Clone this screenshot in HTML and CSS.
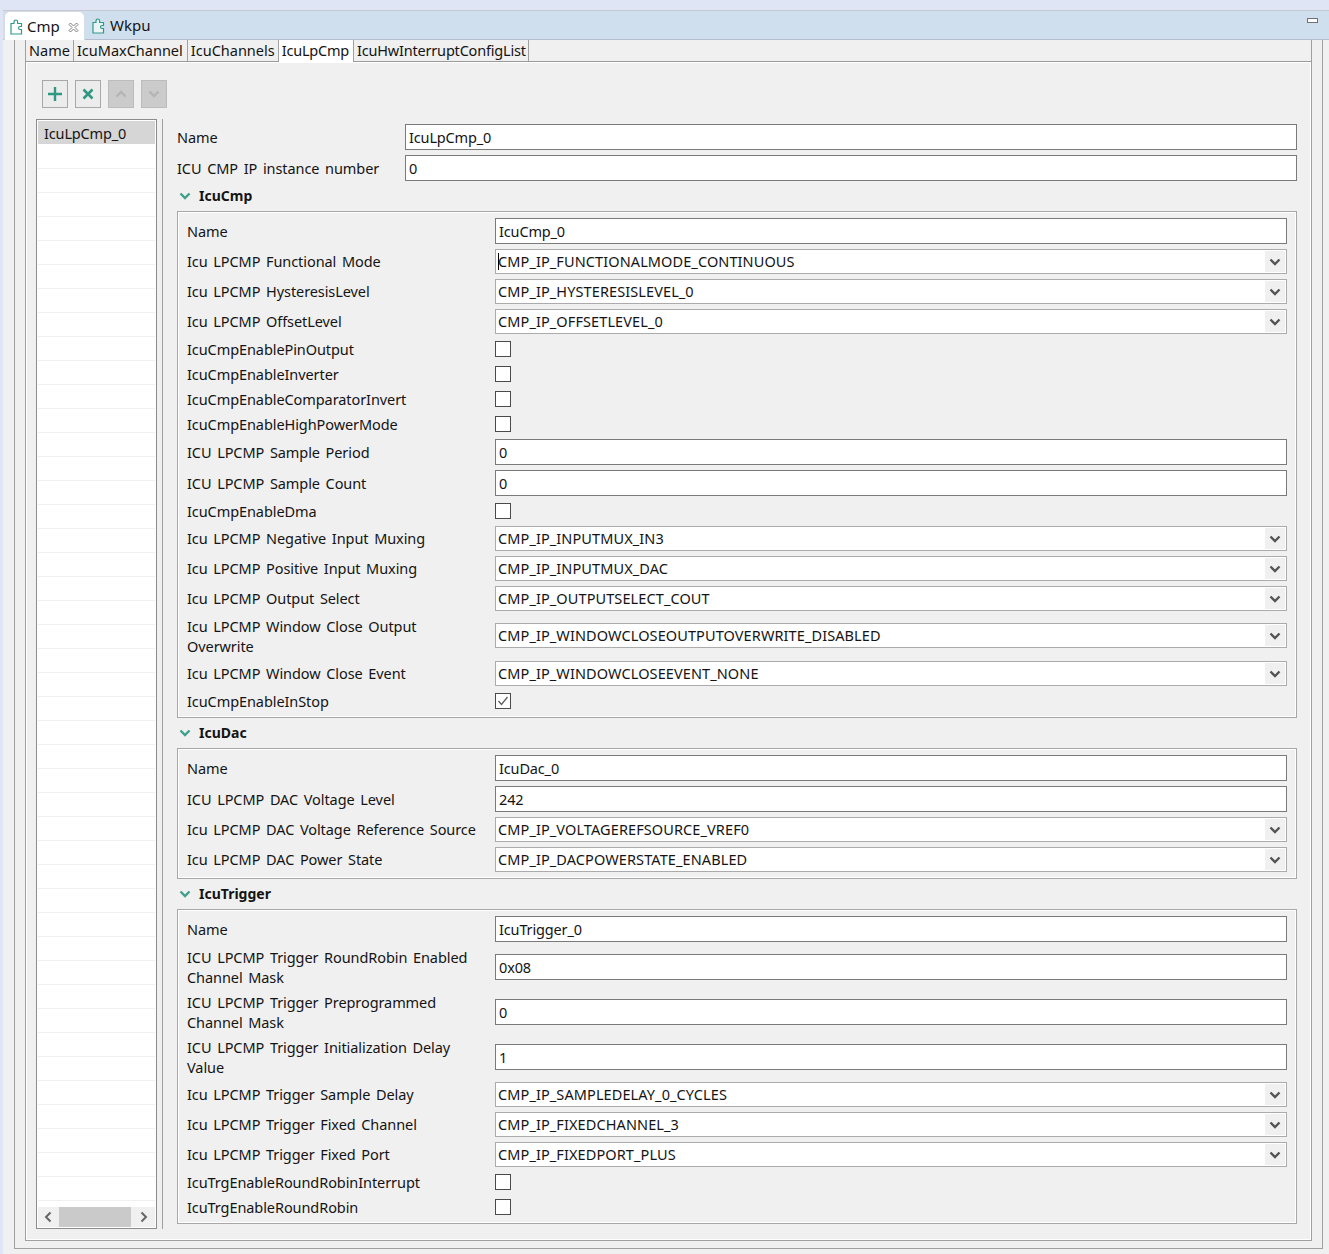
FILE: index.html
```html
<!DOCTYPE html>
<html lang="en">
<head>
<meta charset="utf-8">
<title>Cmp</title>
<link rel="stylesheet" href="styles.css">
</head>
<body>
<div class="topstrip"></div>
<div class="tabbar">
  <div class="tab active">
    <svg class="puzzle" viewBox="0 0 13 16"><path d="M1 4.500h3V2.800a1.800 1.800 0 0 1 3.600 0V4.500H11.500V7.500H10a1.500 1.500 0 0 0 0 3h1.500V15H1z" fill="#fff" stroke="#2e9c87" stroke-width="1.200"/></svg>
    <span>Cmp</span>
    <svg class="close" viewBox="0 0 11 11"><path d="M1 2.500 2.500 1l3 3 3-3L10 2.500l-3 3 3 3L8.500 10l-3-3-3 3L1 8.500l3-3z" fill="#fff" stroke="#7e7e7e" stroke-width="1"/></svg>
  </div>
  <div class="tab inactive">
    <svg class="puzzle" viewBox="0 0 13 16"><path d="M1 4.500h3V2.800a1.800 1.800 0 0 1 3.600 0V4.500H11.500V7.500H10a1.500 1.500 0 0 0 0 3h1.500V15H1z" fill="#eaf4f2" stroke="#2e9c87" stroke-width="1.200"/></svg>
    <span>Wkpu</span>
  </div>
  <div class="minimize"></div>
</div>
<div class="outer">
  <div class="inner">
    <div class="subtabs">
      <div class="subtab st-name">Name</div>
      <div class="subtab st-max">IcuMaxChannel</div>
      <div class="subtab st-chan">IcuChannels</div>
      <div class="subtab current">IcuLpCmp</div>
      <div class="subtab tight">IcuHwInterruptConfigList</div>
    </div>
    <div class="page">
      <div class="toolbar">
        <div class="tbtn"><svg viewBox="0 0 24 26"><path d="M12 6v14M5 13h14" stroke="#2e9880" stroke-width="2.400" fill="none"/></svg></div>
        <div class="tbtn"><svg viewBox="0 0 24 26"><path d="M7.500 8.500l9 9M16.500 8.500l-9 9" stroke="#2e9880" stroke-width="2.600" fill="none"/></svg></div>
        <div class="tbtn off"><svg viewBox="0 0 24 26"><path d="M7.500 15.500l4.500-4.500 4.500 4.500" stroke="#b4b4b4" stroke-width="2.400" fill="none"/></svg></div>
        <div class="tbtn off"><svg viewBox="0 0 24 26"><path d="M7.500 10.500l4.500 4.500 4.500-4.500" stroke="#b4b4b4" stroke-width="2.400" fill="none"/></svg></div>
      </div>
      <div class="master">
        <div class="list">
          <div class="listbody">
            <div class="item selected">IcuLpCmp_0</div>
            <div class="item"></div><div class="item"></div><div class="item"></div><div class="item"></div><div class="item"></div>
            <div class="item"></div><div class="item"></div><div class="item"></div><div class="item"></div><div class="item"></div>
            <div class="item"></div><div class="item"></div><div class="item"></div><div class="item"></div><div class="item"></div>
            <div class="item"></div><div class="item"></div><div class="item"></div><div class="item"></div><div class="item"></div>
            <div class="item"></div><div class="item"></div><div class="item"></div><div class="item"></div><div class="item"></div>
            <div class="item"></div><div class="item"></div><div class="item"></div><div class="item"></div><div class="item"></div>
            <div class="item"></div><div class="item"></div><div class="item"></div><div class="item"></div><div class="item"></div>
            <div class="item"></div><div class="item"></div><div class="item"></div><div class="item"></div><div class="item"></div>
            <div class="item"></div><div class="item"></div><div class="item"></div><div class="item"></div><div class="item"></div>
          </div>
          <div class="hscroll">
            <svg class="harrow" viewBox="0 0 8 12"><path d="M6.500 1.500L2 6l4.500 4.500" fill="none" stroke="#666" stroke-width="2"/></svg>
            <div class="thumb"></div>
            <svg class="harrow" viewBox="0 0 8 12"><path d="M1.500 1.500L6 6l-4.500 4.500" fill="none" stroke="#666" stroke-width="2"/></svg>
          </div>
        </div>
        <div class="sash"></div>
        <div class="detail">
          <div class="rows top">
            <div class="label">Name</div><div class="input">IcuLpCmp_0</div>
            <div class="label">ICU CMP IP instance number</div><div class="input">0</div>
          </div>

          <div class="sechead"><svg class="twist" viewBox="0 0 12 8"><path d="M1.500 1.500L6 6l4.500-4.500" fill="none" stroke="#3f9f8c" stroke-width="2.400"/></svg>IcuCmp</div>
          <div class="group">
            <div class="rows">
              <div class="label">Name</div><div class="input">IcuCmp_0</div>
              <div class="label">Icu LPCMP Functional Mode</div><div class="select focused"><span class="caret"></span>CMP_IP_FUNCTIONALMODE_CONTINUOUS<span class="drop"><svg viewBox="0 0 12 8"><path d="M1.500 1.500L6 6l4.500-4.500" fill="none" stroke="#555" stroke-width="2.400"/></svg></span></div>
              <div class="label">Icu LPCMP HysteresisLevel</div><div class="select">CMP_IP_HYSTERESISLEVEL_0<span class="drop"><svg viewBox="0 0 12 8"><path d="M1.500 1.500L6 6l4.500-4.500" fill="none" stroke="#555" stroke-width="2.400"/></svg></span></div>
              <div class="label">Icu LPCMP OffsetLevel</div><div class="select">CMP_IP_OFFSETLEVEL_0<span class="drop"><svg viewBox="0 0 12 8"><path d="M1.500 1.500L6 6l4.500-4.500" fill="none" stroke="#555" stroke-width="2.400"/></svg></span></div>
              <div class="label">IcuCmpEnablePinOutput</div><div class="checkcell"><span class="check"></span></div>
              <div class="label">IcuCmpEnableInverter</div><div class="checkcell"><span class="check"></span></div>
              <div class="label">IcuCmpEnableComparatorInvert</div><div class="checkcell"><span class="check"></span></div>
              <div class="label">IcuCmpEnableHighPowerMode</div><div class="checkcell"><span class="check"></span></div>
              <div class="label">ICU LPCMP Sample Period</div><div class="input">0</div>
              <div class="label">ICU LPCMP Sample Count</div><div class="input">0</div>
              <div class="label">IcuCmpEnableDma</div><div class="checkcell"><span class="check"></span></div>
              <div class="label">Icu LPCMP Negative Input Muxing</div><div class="select">CMP_IP_INPUTMUX_IN3<span class="drop"><svg viewBox="0 0 12 8"><path d="M1.500 1.500L6 6l4.500-4.500" fill="none" stroke="#555" stroke-width="2.400"/></svg></span></div>
              <div class="label">Icu LPCMP Positive Input Muxing</div><div class="select">CMP_IP_INPUTMUX_DAC<span class="drop"><svg viewBox="0 0 12 8"><path d="M1.500 1.500L6 6l4.500-4.500" fill="none" stroke="#555" stroke-width="2.400"/></svg></span></div>
              <div class="label">Icu LPCMP Output Select</div><div class="select">CMP_IP_OUTPUTSELECT_COUT<span class="drop"><svg viewBox="0 0 12 8"><path d="M1.500 1.500L6 6l4.500-4.500" fill="none" stroke="#555" stroke-width="2.400"/></svg></span></div>
              <div class="label two">Icu LPCMP Window Close Output Overwrite</div><div class="select">CMP_IP_WINDOWCLOSEOUTPUTOVERWRITE_DISABLED<span class="drop"><svg viewBox="0 0 12 8"><path d="M1.500 1.500L6 6l4.500-4.500" fill="none" stroke="#555" stroke-width="2.400"/></svg></span></div>
              <div class="label">Icu LPCMP Window Close Event</div><div class="select">CMP_IP_WINDOWCLOSEEVENT_NONE<span class="drop"><svg viewBox="0 0 12 8"><path d="M1.500 1.500L6 6l4.500-4.500" fill="none" stroke="#555" stroke-width="2.400"/></svg></span></div>
              <div class="label">IcuCmpEnableInStop</div><div class="checkcell"><span class="check"><svg viewBox="0 0 14 14"><path d="M2.500 7l3 3.500 6-7.500" fill="none" stroke="#5e5e5e" stroke-width="1.300"/></svg></span></div>
            </div>
          </div>

          <div class="sechead"><svg class="twist" viewBox="0 0 12 8"><path d="M1.500 1.500L6 6l4.500-4.500" fill="none" stroke="#3f9f8c" stroke-width="2.400"/></svg>IcuDac</div>
          <div class="group">
            <div class="rows">
              <div class="label">Name</div><div class="input">IcuDac_0</div>
              <div class="label">ICU LPCMP DAC Voltage Level</div><div class="input">242</div>
              <div class="label">Icu LPCMP DAC Voltage Reference Source</div><div class="select">CMP_IP_VOLTAGEREFSOURCE_VREF0<span class="drop"><svg viewBox="0 0 12 8"><path d="M1.500 1.500L6 6l4.500-4.500" fill="none" stroke="#555" stroke-width="2.400"/></svg></span></div>
              <div class="label">Icu LPCMP DAC Power State</div><div class="select">CMP_IP_DACPOWERSTATE_ENABLED<span class="drop"><svg viewBox="0 0 12 8"><path d="M1.500 1.500L6 6l4.500-4.500" fill="none" stroke="#555" stroke-width="2.400"/></svg></span></div>
            </div>
          </div>

          <div class="sechead"><svg class="twist" viewBox="0 0 12 8"><path d="M1.500 1.500L6 6l4.500-4.500" fill="none" stroke="#3f9f8c" stroke-width="2.400"/></svg>IcuTrigger</div>
          <div class="group">
            <div class="rows">
              <div class="label">Name</div><div class="input">IcuTrigger_0</div>
              <div class="label">ICU LPCMP Trigger RoundRobin Enabled Channel Mask</div><div class="input">0x08</div>
              <div class="label">ICU LPCMP Trigger Preprogrammed Channel Mask</div><div class="input">0</div>
              <div class="label">ICU LPCMP Trigger Initialization Delay Value</div><div class="input">1</div>
              <div class="label">Icu LPCMP Trigger Sample Delay</div><div class="select">CMP_IP_SAMPLEDELAY_0_CYCLES<span class="drop"><svg viewBox="0 0 12 8"><path d="M1.500 1.500L6 6l4.500-4.500" fill="none" stroke="#555" stroke-width="2.400"/></svg></span></div>
              <div class="label">Icu LPCMP Trigger Fixed Channel</div><div class="select">CMP_IP_FIXEDCHANNEL_3<span class="drop"><svg viewBox="0 0 12 8"><path d="M1.500 1.500L6 6l4.500-4.500" fill="none" stroke="#555" stroke-width="2.400"/></svg></span></div>
              <div class="label">Icu LPCMP Trigger Fixed Port</div><div class="select">CMP_IP_FIXEDPORT_PLUS<span class="drop"><svg viewBox="0 0 12 8"><path d="M1.500 1.500L6 6l4.500-4.500" fill="none" stroke="#555" stroke-width="2.400"/></svg></span></div>
              <div class="label">IcuTrgEnableRoundRobinInterrupt</div><div class="checkcell"><span class="check"></span></div>
              <div class="label">IcuTrgEnableRoundRobin</div><div class="checkcell"><span class="check"></span></div>
            </div>
          </div>
        </div>
      </div>
    </div>
  </div>
</div>
</body>
</html>
```
FILE: styles.css
```css
* { box-sizing: border-box; }
html, body { margin: 0; padding: 0; }
body {
  width: 1329px;
  height: 1254px;
  overflow: hidden;
  background: #f0f0f0;
  font-family: "Noto Sans", "Open Sans", sans-serif;
  font-size: 14.5px;
  line-height: 20px;
  color: #141414;
  border-left: 3px solid #e0e5f5;
}
.topstrip { height: 11px; margin-left: -3px; background: #e0e5f5; border-bottom: 1px solid #c8c8d0; }
.tabbar {
  height: 29px;
  margin-left: -3px;
  padding-left: 4px;
  background: #cfdfee;
  border-bottom: 1px solid #b4bcd0;
  display: flex;
  position: relative;
}
.tab { display: flex; align-items: center; height: 28px; gap: 4px; font-size: 15px; }
.tab.active { width: 81px; padding-left: 5px; background: #fff; border-radius: 6px 6px 0 0; height: 29px; border: 1px solid #d4dce6; border-bottom: 0; z-index: 1; }
.tab.inactive { padding-left: 7px; gap: 5px; }
.puzzle { width: 13px; height: 16px; flex: none; margin-top: 2px; }
.close { width: 11px; height: 11px; margin-left: 4px; margin-top: 2px; flex: none; }
.minimize { position: absolute; right: 11px; top: 7px; width: 11px; height: 5px; background: #fff; border: 1px solid #707070; }
.outer {
  margin: 0 6px 0 11px;
  height: 1209px;
  border: 1px solid #a0a0a0;
  border-top: 0;
  padding: 0 10px 7px;
  background: #f0f0f0;
}
.inner { height: 1201px; display: flex; flex-direction: column; }
.subtabs { display: flex; height: 22px; border-bottom: 1px solid #9a9a9a; border-right: 1px solid #a0a0a0; flex: none; border-left: 1px solid #a0a0a0; }
.subtab { padding: 0 4px 0 3px; height: 21px; line-height: 21px; border-right: 1px solid #a0a0a0; }
.subtab.st-name { padding-right: 3px; }
.subtab.st-max { padding-right: 4px; }
.subtab.st-chan { padding-right: 3px; }
.subtab.current { background: #fff; height: 22px; z-index: 1; letter-spacing: -0.2px; }
.subtab.tight { letter-spacing: -0.2px; padding-right: 2px; }
.page { flex: 1; border: 1px solid #a0a0a0; border-top: 0; background: #f0f0f0; box-shadow: inset 0 0 0 1px #fff; padding: 18px 14px 0 10px; }
.toolbar { display: flex; gap: 7px; margin-left: 6px; height: 28px; }
.tbtn { width: 26px; height: 28px; border: 1px solid #a8a8a8; background: #ececec; }
.tbtn.off { background: #cbcbcb; border-color: #bcbcbc; }
.tbtn svg { display: block; width: 24px; height: 26px; }
.master { display: flex; margin-top: 11px; height: 1110px; }
.list { width: 121px; height: 1110px; border: 1px solid #8c8c8c; background: #fff; padding: 1px; display: flex; flex-direction: column; flex: none; }
.listbody { flex: 1; overflow: hidden; }
.item { height: 24px; border-bottom: 1px solid #f0f0f0; padding-left: 6px; line-height: 24px; letter-spacing: -0.15px; }
.item.selected { background: #d6d6d6; background-clip: padding-box; border-bottom-color: #fff; }
.hscroll { height: 20px; background: #f0f0f0; display: flex; align-items: center; flex: none; }
.harrow { width: 8px; height: 12px; margin: 0 7px 0 6px; flex: none; }
.thumb { width: 73px; height: 20px; background: #cacaca; }
.thumb + .harrow { margin-left: 9px; }
.sash { width: 1px; margin-left: 5px; height: 1110px; background: #a0a0a0; flex: none; }
.detail { flex: 1; margin-left: 14px; padding-top: 5px; }
.rows { display: grid; grid-template-columns: 308px 1fr; row-gap: 5px; align-items: center; }
.rows.top { grid-template-columns: 228px 1fr; }
.label { line-height: 20px; max-width: 298px; word-spacing: 2px; letter-spacing: -0.08px; }
.rows.top .label { max-width: none; }
.label:has(+ .select):not(.two) { margin-bottom: 1px; }
.label.two + .select { align-self: start; margin-top: 7px; }
.input { height: 26px; background: #fff; border: 1px solid #7a7a7a; padding-left: 3px; line-height: 24px; white-space: nowrap; letter-spacing: -0.15px; }
.select { height: 25px; background: #fff; border: 1px solid #ababab; padding-left: 2px; line-height: 22px; position: relative; white-space: nowrap; letter-spacing: 0.1px; }
.drop { position: absolute; right: 1px; top: 1px; bottom: 1px; width: 20px; padding-right: 1px; background: #f0f0f0; display: flex; align-items: center; justify-content: center; }
.drop svg { width: 12px; height: 8px; }
.caret { position: absolute; left: 2px; top: 3px; width: 1px; height: 17px; background: #000; }
.checkcell { height: 20px; display: flex; align-items: center; }
.check { width: 16px; height: 16px; border: 1px solid #4a4a4a; background: #fff; display: block; }
.check svg { display: block; width: 14px; height: 14px; }
.sechead { height: 30px; display: flex; align-items: center; font-weight: 700; font-size: 14px; padding-left: 2px; gap: 8px; }
.twist { width: 12px; height: 8px; flex: none; }
.group { border: 1px solid #a8a8a8; box-shadow: inset 0 0 0 1px #fff; padding: 6px 9px 6px; }
```
